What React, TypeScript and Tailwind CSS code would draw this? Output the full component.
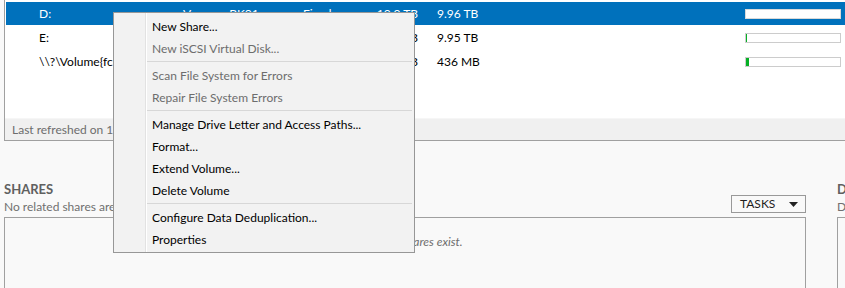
import React from "react";

const font = { fontFamily: 'Lato, "Noto Sans", sans-serif' };

type Row = { name: string; label: string; type: string; cap: string; free: string; fill: number; selected?: boolean };

const rows: Row[] = [
  { name: "D:", label: "Vmware BK01", type: "Fixed", cap: "10.0 TB", free: "9.96 TB", fill: 0, selected: true },
  { name: "E:", label: "Vmware BK02", type: "Fixed", cap: "10.0 TB", free: "9.95 TB", fill: 1 },
  { name: "\\\\?\\Volume{fc2a1b3e-0000}", label: "Recovery", type: "Fixed", cap: "499 MB", free: "436 MB", fill: 3 },
];

function MenuItem({ label, disabled }: { label: string; disabled?: boolean }) {
  return (
    <div className={`h-[22px] flex items-center pl-[38px] ${disabled ? "text-[#6d6d6d]" : "text-black"}`}>
      {label}
    </div>
  );
}

function Sep() {
  return (
    <div className="h-[5px] pt-[1px] pl-[33px] pr-[2px]">
      <div className="h-px bg-[#d7d7d7]" />
    </div>
  );
}

export default function App() {
  return (
    <div className="relative w-[845px] h-[288px] overflow-hidden bg-[#f9f9f9] text-[12px]" style={font}>
      {/* Top volumes panel */}
      <div className="ml-[4px] w-[900px] border-l border-b border-[#a0a0a0]">
        <div className="h-[118px] bg-white pt-[2px] pl-[1px] flex flex-col gap-px">
          {rows.map((r) => (
            <div
              key={r.name}
              className={`h-[23px] flex items-center ${r.selected ? "bg-[#0071bc] text-white" : "text-black"}`}
            >
              <div className="w-[177px] shrink-0 pl-[33px] whitespace-nowrap overflow-hidden">{r.name}</div>
              <div className="w-[120px] shrink-0 whitespace-nowrap">{r.label}</div>
              <div className="w-[60px] shrink-0 whitespace-nowrap">{r.type}</div>
              <div className="w-[55px] shrink-0 text-right whitespace-nowrap">{r.cap}</div>
              <div className="w-[327px] shrink-0 pl-[19px] whitespace-nowrap">{r.free}</div>
              <div
                className={`w-[96px] h-[10px] shrink-0 border bg-white ${r.selected ? "border-[#d9d9d9]" : "border-[#cccccc]"}`}
              >
                {r.fill > 0 && <div className="h-full bg-[#06b025]" style={{ width: r.fill }} />}
              </div>
            </div>
          ))}
        </div>
        <div className="h-[22px] bg-[#f0f0f0] border-t border-[#f6f6f6] flex items-center pl-[7px] text-[#6d6d6d]">
          Last refreshed on 1/15/2024 10:32:11 AM
        </div>
      </div>

      {/* Lower sections */}
      <div className="flex gap-[31px] pl-[4px] mt-[39px]">
        <div className="w-[802px] shrink-0">
          <div className="flex items-end justify-between">
            <div>
              <div className="h-[18px] leading-[18px] text-[13px] font-bold text-[#606060]">SHARES</div>
              <div className="h-[18px] leading-[18px] text-[#707070]">No related shares are available.</div>
            </div>
            <div className="mb-[3px] w-[75px] h-[18px] border border-[#999999] flex items-center justify-between pl-[8px] pr-[7px] text-[#1e1e1e]">
              <span>TASKS</span>
              <svg width="9" height="5" viewBox="0 0 9 5">
                <path d="M0 0 L9 0 L4.5 5 Z" fill="#222" />
              </svg>
            </div>
          </div>
          <div className="mt-[1px] h-[80px] border border-[#a0a0a0] flex justify-center pt-[15px]">
            <span className="italic text-[#6d6d6d]">No related shares exist.</span>
          </div>
        </div>
        <div className="w-[200px] shrink-0">
          <div className="h-[18px] leading-[18px] text-[13px] font-bold text-[#606060]">DISKS</div>
          <div className="h-[18px] leading-[18px] text-[#707070]">Disk1 on Server</div>
          <div className="mt-[1px] h-[80px] border border-[#a0a0a0]" />
        </div>
      </div>

      {/* Context menu */}
      <div className="absolute left-[113px] top-[12px] w-[302px] h-[241px] border border-[#979797] bg-[#f2f2f2]">
        <div className="absolute left-[31px] top-0 bottom-0 w-px bg-[#e2e2e2]" />
        <div className="absolute left-[32px] top-0 bottom-0 w-px bg-[#ffffff]" />
        <div className="relative pt-[3px]">
          <MenuItem label="New Share..." />
          <MenuItem label="New iSCSI Virtual Disk..." disabled />
          <Sep />
          <MenuItem label="Scan File System for Errors" disabled />
          <MenuItem label="Repair File System Errors" disabled />
          <Sep />
          <MenuItem label="Manage Drive Letter and Access Paths..." />
          <MenuItem label="Format..." />
          <MenuItem label="Extend Volume..." />
          <MenuItem label="Delete Volume" />
          <Sep />
          <MenuItem label="Configure Data Deduplication..." />
          <MenuItem label="Properties" />
        </div>
      </div>
    </div>
  );
}
